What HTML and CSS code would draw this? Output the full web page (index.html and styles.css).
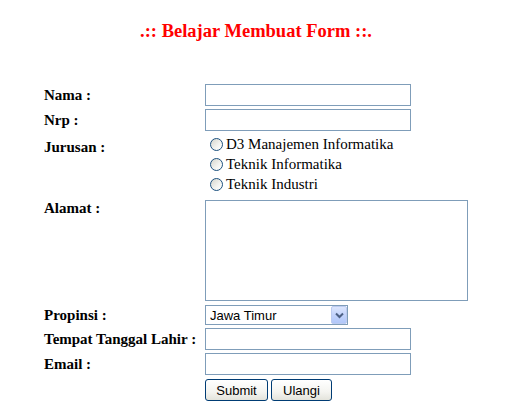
FILE: index.html
```html
<!DOCTYPE html>
<html lang="id">
  <head>
    <meta charset="UTF-8" />
    <title>Belajar Membuat Form</title>
    <link rel="stylesheet" href="styles.css">
  </head>
  <body>
    <div class="judul">.:: Belajar Membuat Form ::.</div>
    <form class="formMhs">
      <table class="formTable">
        <tr>
          <td class="label">Nama :</td>
          <td><input type="text" class="teks" name="nama"></td>
        </tr>
        <tr>
          <td class="label">Nrp :</td>
          <td><input type="text" class="teks" name="nrp"></td>
        </tr>
        <tr>
          <td class="label atas jurusan">Jurusan :</td>
          <td>
            <label class="pilihan"><input type="radio" name="jurusan" value="mi">D3 Manajemen Informatika</label>
            <label class="pilihan"><input type="radio" name="jurusan" value="ti">Teknik Informatika</label>
            <label class="pilihan"><input type="radio" name="jurusan" value="tind">Teknik Industri</label>
          </td>
        </tr>
        <tr>
          <td class="label atas alamat">Alamat :</td>
          <td><textarea class="alamatBox" name="alamat"></textarea></td>
        </tr>
        <tr>
          <td class="label">Propinsi :</td>
          <td>
            <div class="selectWrap">
              <select name="propinsi" class="propinsi">
                <option>Jawa Timur</option>
                <option>Jawa Tengah</option>
                <option>Jawa Barat</option>
              </select>
              <span class="selectBtn">
                <svg width="9" height="7" viewBox="0 0 9 7"><path d="M1 1.5 L4.5 5 L8 1.5" fill="none" stroke="#4d6185" stroke-width="2"/></svg>
              </span>
            </div>
          </td>
        </tr>
        <tr>
          <td class="label">Tempat Tanggal Lahir :</td>
          <td><input type="text" class="teks" name="ttl"></td>
        </tr>
        <tr>
          <td class="label">Email :</td>
          <td><input type="text" class="teks" name="email"></td>
        </tr>
        <tr>
          <td></td>
          <td>
            <div class="tombol">
              <button type="submit" class="btn">Submit</button>
              <button type="reset" class="btn">Ulangi</button>
            </div>
          </td>
        </tr>
      </table>
    </form>
  </body>
</html>
```

FILE: styles.css
```css
body {
  margin: 8px;
  background: #fff;
  font-family: "Liberation Serif", "Times New Roman", serif;
  font-size: 15px;
  color: #000;
}
.judul {
  margin-top: 13px;
  text-align: center;
  color: #ff0000;
  font-weight: bold;
  font-size: 18.5px;
}
.formTable {
  margin: 42px auto 0 auto;
  border-collapse: collapse;
  font-family: "Liberation Serif", "Times New Roman", serif;
  font-size: 15px;
}
.formTable td {
  padding: 0 2px 3px 2px;
}
.label {
  width: 157px;
  white-space: nowrap;
  font-weight: bold;
  vertical-align: middle;
}
.atas {
  vertical-align: top;
}
.jurusan {
  padding-top: 5px !important;
}
.alamat {
  padding-top: 3px !important;
}
.teks {
  display: block;
  box-sizing: border-box;
  width: 206px;
  height: 22px;
  margin: 0;
  border: 1px solid #7f9db9;
  padding: 1px 3px;
  font-family: "Liberation Sans", Arial, sans-serif;
  font-size: 13px;
  outline: none;
}
.pilihan {
  display: flex;
  align-items: center;
  height: 20px;
  font-family: "Liberation Serif", "Times New Roman", serif;
  font-size: 15px;
}
.pilihan input {
  appearance: none;
  -webkit-appearance: none;
  box-sizing: border-box;
  width: 13px;
  height: 13px;
  margin: 0 3px 0 5px;
  border: 1px solid #1c5180;
  border-radius: 50%;
  background: linear-gradient(135deg, #d4d4cc 0%, #f4f4f0 60%, #ffffff 100%);
}
.alamatBox {
  display: block;
  box-sizing: border-box;
  width: 263px;
  height: 101px;
  margin: 3px 0 1px 0;
  border: 1px solid #7f9db9;
  resize: none;
  outline: none;
}
.selectWrap {
  position: relative;
  width: 143px;
  height: 20px;
}
.propinsi {
  appearance: none;
  -webkit-appearance: none;
  display: block;
  box-sizing: border-box;
  width: 143px;
  height: 20px;
  margin: 0;
  padding: 0 0 0 4px;
  border: 1px solid #7f9db9;
  border-radius: 0;
  background: #fff;
  font-family: "Liberation Sans", Arial, sans-serif;
  font-size: 13px;
  color: #000;
  outline: none;
}
.selectBtn {
  position: absolute;
  top: 1px;
  right: 1px;
  width: 16px;
  height: 18px;
  box-sizing: border-box;
  border: 1px solid #bccbf0;
  border-radius: 2px;
  background: linear-gradient(180deg, #dce6fd 0%, #c3d3fc 50%, #b1c7f9 100%);
  display: flex;
  align-items: center;
  justify-content: center;
  pointer-events: none;
}
.tombol {
  display: flex;
  gap: 3px;
  margin-top: 1px;
}
.btn {
  box-sizing: border-box;
  height: 22px;
  margin: 0;
  padding: 0 10px;
  border: 1px solid #003c74;
  border-radius: 3px;
  background: linear-gradient(180deg, #ffffff 0%, #f4f4f0 60%, #e3e3db 100%);
  font-family: "Liberation Sans", Arial, sans-serif;
  font-size: 13px;
  color: #000;
}
.btn:first-child {
  width: 63px;
}
.btn:last-child {
  width: 61px;
}
```
